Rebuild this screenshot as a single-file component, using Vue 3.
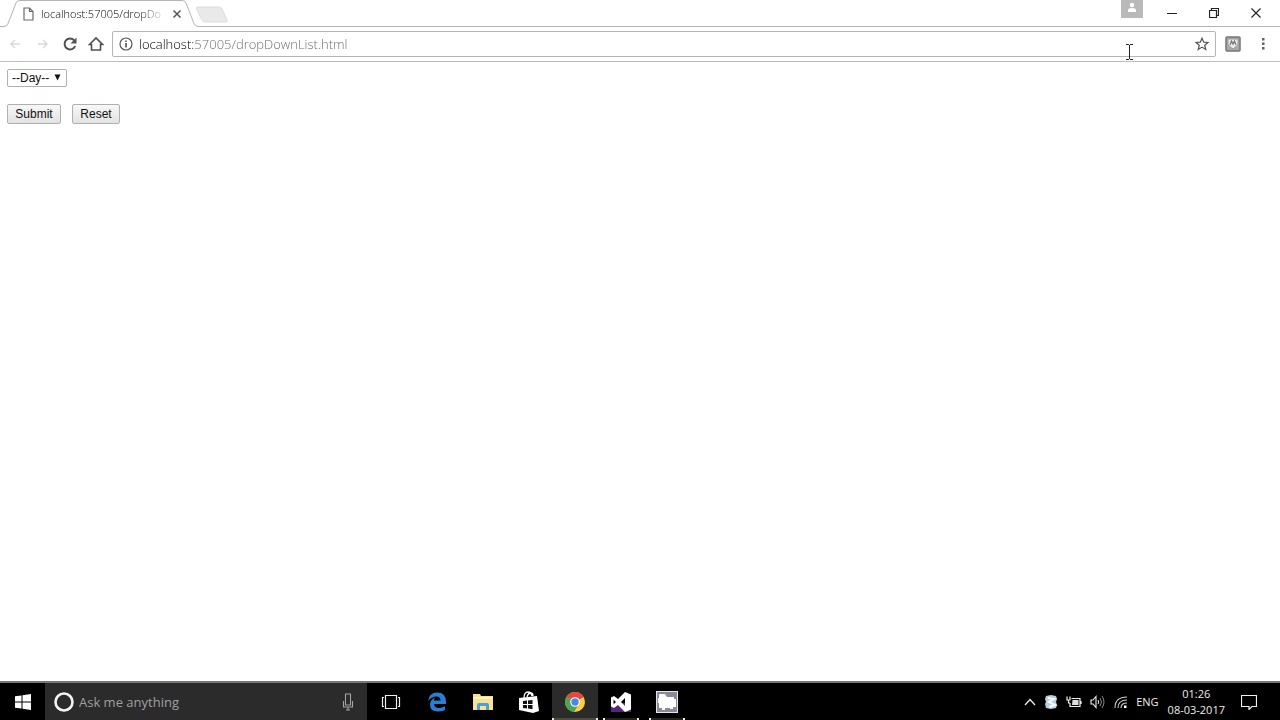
<script setup>
import { ref } from 'vue'
const address = ref('localhost:57005/dropDownList.html')
const query = ref('')
const day = ref('')
</script>

<template>
  <div class="screen">
    <header class="tabstrip">
      <div class="tab">
        <svg class="tab-shape" viewBox="0 0 198 27" width="198" height="27">
          <path d="M0 26.5H4Q7 26.5 8 23.500L16 3Q17 .5 20 .5H182Q185 .5 186 3L194 23.500Q195 26.500 198 26.500V27H0Z" fill="#fff" />
          <path d="M0 26.500H4Q7 26.500 8 23.500L16 3Q17 .5 20 .5H182Q185 .5 186 3L194 23.500Q195 26.500 198 26.500" fill="none" stroke="#b4b4b4" />
        </svg>
        <svg class="doc" viewBox="0 0 11 14" width="11" height="14"><path d="M1 1H6.500L10 4.500V13H1ZM6.500 1V4.500H10" fill="none" stroke="#6a6a6a" stroke-width="1.200" /></svg>
        <span class="title">localhost:57005/dropDo</span>
        <button class="tab-close" aria-label="Close tab"><svg viewBox="0 0 8 8" width="8" height="8"><path d="M.5 .5L7.500 7.500M7.500 .5L.5 7.500" stroke="#555" stroke-width="1.500" /></svg></button>
      </div>
      <div class="strip-rest">
        <button class="new-tab" aria-label="New tab"><svg viewBox="0 0 34 17" width="34" height="17"><path d="M3 1H24Q26 1 27 3L32 14Q33 16 30 16H10Q8 16 7 14L1.500 3Q1 1 3 1Z" fill="#e9e9e9" stroke="#dcdcdc" /></svg></button>
        <div class="window-controls">
          <button class="profile" aria-label="Profile"><svg viewBox="0 0 22 18" width="22" height="18"><path d="M0 0H22V18H0Z" fill="#b9b9b9" /><circle cx="11" cy="5" r="2.200" fill="#fff" /><path d="M7 12V10Q7 8 11 8Q15 8 15 10V12Z" fill="#fff" /></svg></button>
          <button aria-label="Minimize"><svg viewBox="0 0 10 10" width="10" height="10"><path d="M0 5.500H10" stroke="#222" /></svg></button>
          <button aria-label="Restore"><svg viewBox="0 0 10 10" width="10" height="10"><path d="M.5 2.500H7.500V9.500H.5ZM2.500 2.500V.5H9.500V7.500H7.500" fill="none" stroke="#222" stroke-width="1.200" /></svg></button>
          <button aria-label="Close"><svg viewBox="0 0 10 10" width="10" height="10"><path d="M.5 .5L9.500 9.500M9.500 .5L.5 9.500" stroke="#222" stroke-width="1.100" /></svg></button>
        </div>
      </div>
    </header>

    <nav class="toolbar">
      <button class="tool back" aria-label="Back"><svg viewBox="0 0 12 12" width="12" height="12"><path d="M11 6H2M6 2L2 6L6 10" fill="none" stroke="#dadada" stroke-width="1.500" /></svg></button>
      <button class="tool forward" aria-label="Forward"><svg viewBox="0 0 12 12" width="12" height="12"><path d="M1 6H10M6 2L10 6L6 10" fill="none" stroke="#dadada" stroke-width="1.500" /></svg></button>
      <button class="tool reload" aria-label="Reload"><svg viewBox="0 0 16 16" width="16" height="16"><path d="M13.200 10A5.500 5.500 0 1 1 12.200 4.300" fill="none" stroke="#505050" stroke-width="2" /><path d="M14.500 1.500V7.500H8.500Z" fill="#505050" /></svg></button>
      <button class="tool home" aria-label="Home"><svg viewBox="0 0 16 16" width="16" height="16"><path d="M1.500 8.500L8 2L14.500 8.500H12.500V14H3.500V8.500Z" fill="none" stroke="#505050" stroke-width="1.600" /></svg></button>
      <div class="omnibox">
        <svg viewBox="0 0 14 14" width="14" height="14"><circle cx="7" cy="7" r="6" fill="none" stroke="#555" stroke-width="1.200" /><path d="M7 6V10.500M7 3.500V5" stroke="#444" stroke-width="1.500" /></svg>
        <input v-model="address" class="address" type="text" aria-label="Address" spellcheck="false" />
        <button class="star" aria-label="Bookmark"><svg viewBox="0 0 14 14" width="14" height="14"><path d="M7 1.200L8.700 5.200L13 5.500L9.700 8.200L10.800 12.500L7 10.100L3.200 12.500L4.300 8.200L1 5.500L5.300 5.200Z" fill="none" stroke="#555" stroke-width="1.200" /></svg></button>
      </div>
      <button class="tool extension" aria-label="Extension"><svg viewBox="0 0 16 16" width="16" height="16"><rect x="1" y="1" width="14" height="14" rx="1" fill="#aaa" stroke="#777" stroke-width="1.500" /><path d="M3 3H13V9L8 13L3 9Z" fill="#ededed" stroke="#999" /><path d="M5 9L6.500 5L8 8L9.500 5L11 9" fill="none" stroke="#777" stroke-width="1.300" /></svg></button>
      <button class="tool menu" aria-label="Menu"><svg viewBox="0 0 4 14" width="4" height="14"><path d="M1 1H3.500V3.500H1ZM1 5.500H3.500V8H1ZM1 10H3.500V12.500H1Z" fill="#626262" /></svg></button>
      <svg class="cursor" viewBox="0 0 7 16" width="7" height="16"><path d="M0 .5H3M4 .5H7M3.500 1V15M0 15.500H3M4 15.500H7" stroke="#222" fill="none" /></svg>
    </nav>

    <main class="page">
      <form @submit.prevent>
        <div class="select-wrap">
          <select v-model="day" aria-label="Day"><option value="">--Day--</option></select>
          <svg viewBox="0 0 7 7" width="7" height="7"><path d="M.5 .5H6.500L3.500 6.500Z" fill="#111" /></svg>
        </div>
        <div class="actions">
          <button class="push submit" type="submit">Submit</button>
          <button class="push reset" type="reset">Reset</button>
        </div>
      </form>
    </main>

    <footer class="taskbar">
      <button class="start" aria-label="Start"><svg viewBox="0 0 16 16" width="16" height="16"><path d="M0 2.300L6.500 1.400V7.500H0ZM7.500 1.200L16 0V7.500H7.500ZM0 8.500H6.500V14.600L0 13.700ZM7.500 8.500H16V16L7.500 14.800Z" fill="#fff" /></svg></button>
      <div class="search">
        <svg viewBox="0 0 20 20" width="20" height="20"><circle cx="10" cy="10" r="8.500" fill="none" stroke="#f4f4f4" stroke-width="2.600" /></svg>
        <input v-model="query" type="text" placeholder="Ask me anything" aria-label="Ask me anything" />
        <button aria-label="Speak"><svg viewBox="0 0 12 18" width="12" height="18"><path d="M3.500 1H8.500V12H3.500ZM1.500 8V14H10.500V8M6 14V17M4 17H8" fill="none" stroke="#a3a3a3" stroke-width="1.100" /></svg></button>
      </div>
      <div class="apps">
        <button class="task-view" aria-label="Task view"><svg viewBox="0 0 20 14" width="20" height="14"><path d="M4.500 .5H15.500V13.500H4.500ZM3 2.500H1.500V11.500H3M17 2.500H18.500V11.500H17" fill="none" stroke="#eee" stroke-width="1.200" /></svg></button>
        <button aria-label="Edge"><svg viewBox="0 0 20 20" width="20" height="20"><path d="M1 9Q2 .5 10.500 .5Q19 .5 19 10V12H7Q7.500 16 12 16Q15 16 18 14.300V18Q15 19.500 11 19.500Q3 19.500 3 12.500Q3 8 8 5.500Q7 7 7 8.500H13.500Q13.500 4.500 9.500 4.500Q4.500 4.500 1 9Z" fill="#2b7cd3" /></svg></button>
        <button aria-label="File Explorer"><svg viewBox="0 0 20 18" width="20" height="18"><path d="M0 1H7L8 3H20V17H0Z" fill="#f8e296" /><path d="M1 4H19V6H1Z" fill="#fff3bd" /><path d="M4 17V12Q4 10 6 10H14Q16 10 16 12V17H13V13H7V17Z" fill="#4a9fdd" /></svg></button>
        <button aria-label="Store"><svg viewBox="0 0 20 22" width="20" height="22"><path d="M5 7Q5 1 9 1Q12 1 13 5M8 6Q9 2 12 2Q14 2 14 5" fill="none" stroke="#fff" stroke-width="1.300" /><path d="M0 7L18 5L20 20L14 22L0 19Z" fill="#fff" /><path d="M4 10L8 9.500V13H4ZM9 9.400L13.500 9V13H9ZM4 14H8V17.500L4 17ZM9 14H13.500V18.200L9 17.600Z" fill="#111" /></svg></button>
        <button class="active running" aria-label="Chrome"><svg viewBox="0 0 20 20" width="20" height="20"><circle cx="10" cy="10" r="10" fill="#f8cf45" /><path d="M10 10L1.340 5A10 10 0 0 1 18.660 5Z" fill="#df4b3d" /><path d="M10 5H18.660A10 10 0 0 0 10 0Z" fill="#df4b3d" /><path d="M1.340 5A10 10 0 0 0 9 19.950L14 12L10 10Z" fill="#4ba35c" /><circle cx="10" cy="10" r="4.800" fill="#fff" /><circle cx="10" cy="10" r="3.700" fill="#4a87ea" /></svg></button>
        <button class="running" aria-label="Visual Studio"><svg viewBox="0 0 20 20" width="20" height="20"><path d="M0 11H20V20H0Z" fill="#5c2478" /><path d="M14 0L20 2.500V17.500L14 20L7 13L3 16L0 14.500V5.500L3 4L7 7ZM14 6L10 10L14 14ZM2.500 7.500V12.500L5 10Z" fill="#fff" fill-rule="evenodd" /></svg></button>
        <button class="running" aria-label="Recorder"><svg viewBox="0 0 22 22" width="22" height="22"><path d="M0 0H22V22H0Z" fill="#e6e5ed" /><path d="M1 1H21V21H1Z" fill="#8b8998" /><path d="M3 4Q3 3 4 3H9L11 6H18V8H20V16H17V18H14V17H9V19H6V17H3V12H2V7H3Z" fill="#fff" /></svg></button>
      </div>
      <div class="tray">
        <svg viewBox="0 0 12 8" width="12" height="8"><path d="M1 7L6 1.500L11 7" fill="none" stroke="#eee" stroke-width="1.300" /></svg>
        <svg viewBox="0 0 14 14" width="14" height="14"><path d="M2 1L7 0L12 1L13 4L12 7L13 10L12 13L7 14L2 13L1 9L2 7L1 4Z" fill="#b9cddd" /><path d="M4 3L10 4L5 7L11 10L5 12" fill="none" stroke="#f5faff" stroke-width="2" /></svg>
        <svg viewBox="0 0 16 12" width="16" height="12"><path d="M5.500 2.500H14V10.500H4V7M15 5V8M1 .5V4H4V.5M2.500 4V7H4" fill="none" stroke="#eee" stroke-width="1.200" /><path d="M6.500 4H12.500V9H6Z" fill="#ddd" /></svg>
        <svg viewBox="0 0 16 14" width="16" height="14"><path d="M1 5H3L6 1.500V12.500L3 9H1Z" fill="none" stroke="#eee" stroke-width="1.100" /><path d="M8 5Q9.500 7 8 9" fill="none" stroke="#eee" /><path d="M10 3Q13 7 10 11M12 1Q16 7 12 13" fill="none" stroke="#888" /></svg>
        <svg viewBox="0 0 14 14" width="14" height="14"><path d="M1 13Q1 2 13 2M4 13Q4 5 13 5M7 13Q7 8 13 8" fill="none" stroke="#ccc" stroke-width="1.100" /><path d="M10 10.500H12.500V13H10Z" fill="#fff" /></svg>
        <span class="language">ENG</span>
        <time class="clock"><span>01:26</span><span>08-03-2017</span></time>
        <button class="notifications" aria-label="Notifications"><svg viewBox="0 0 16 16" width="16" height="16"><path d="M.5 1.500H15.500V12.500H11L8 15.500V12.500H.5Z" fill="none" stroke="#eee" stroke-width="1.200" /></svg></button>
      </div>
    </footer>
  </div>
</template>

<style>
body { background: #fff; }
</style>

<style scoped>
.screen { min-height: 100vh; display: flex; flex-direction: column; font-family: "Open Sans", "Noto Sans", sans-serif; }
* { box-sizing: border-box; }
button { border: 0; padding: 0; background: none; font: inherit; display: flex; align-items: center; justify-content: center; }
input { border: 0; padding: 0; outline: 0; background: none; font: inherit; min-width: 0; }
svg { flex: none; display: block; }
.tabstrip { height: 27px; display: flex; }
.tab { position: relative; width: 198px; display: flex; align-items: center; padding: 0 13px 0 23px; }
.tab-shape { position: absolute; inset: 0; }
.doc, .title, .tab-close { position: relative; }
.title { flex: 1; margin-left: 7px; white-space: nowrap; font-size: 11px; font-weight: 300; line-height: 16px; color: #000; mask-image: linear-gradient(90deg, #000 98px, transparent 126px); }
.tab-close { width: 16px; height: 16px; }
.strip-rest { flex: 1; display: flex; justify-content: space-between; align-items: flex-start; border-bottom: 1px solid #b4b4b4; }
.new-tab { margin-top: 6px; margin-left: -3px; }
.window-controls { display: flex; padding-right: 3px; }
.window-controls button { width: 42px; height: 25px; }
.window-controls .profile { width: 22px; height: 18px; margin-right: 8px; }
.toolbar { position: relative; height: 35px; display: flex; align-items: center; border-bottom: 1px solid #bdbdbd; padding: 0 4px 0 2px; }
.tool { flex: none; width: 26px; height: 26px; }
.forward { width: 30px; }
.reload { width: 24px; }
.home { width: 28px; }
.omnibox { flex: 1; min-width: 0; height: 26px; margin-left: 2px; border: 1px solid #b5b5b5; border-radius: 2px; display: flex; align-items: center; padding: 0 6px; gap: 6px; }
.address { flex: 1; height: 20px; font-size: 13px; font-weight: 300; color: transparent; background: linear-gradient(90deg, #000 54px, #666 54px); background-clip: text; -webkit-background-clip: text; }
.extension { width: 34px; }
.cursor { position: absolute; right: 147px; top: 17px; }
.page { flex: 1; padding: 7px; font-family: "Liberation Sans", Arial, sans-serif; font-size: 12px; }
.select-wrap { position: relative; width: 60px; height: 18px; }
select { appearance: none; width: 60px; height: 18px; border: 1px solid #b0b0b0; border-radius: 2px; padding: 0 4px; background: #fff; font: inherit; color: #111; }
.select-wrap svg { position: absolute; right: 6px; top: 5px; pointer-events: none; }
.actions { display: flex; gap: 11px; margin-top: 17px; }
.push { height: 20px; border: 1px solid #b0b0b0; border-radius: 2px; background: linear-gradient(#f8f8f8, #e2e2e2); color: #111; }
.submit { width: 54px; }
.reset { width: 48px; }
.taskbar { height: 39px; display: flex; background: #000; border-top: 2px solid #777; color: #eee; }
.start { width: 45px; }
.search { width: 322px; background: #2b2b2b; display: flex; align-items: center; padding: 0 13px 0 9px; }
.search input { flex: 1; margin-left: 5px; font-size: 13px; height: 24px; color: #ddd; }
.search input::placeholder { color: #a0a0a0; opacity: 1; }
.apps { display: flex; }
.apps button { position: relative; width: 46px; }
.apps .task-view { width: 47px; }
.apps .active { background: #2b2b2b; }
.running::after { content: ""; position: absolute; left: 5px; right: 5px; bottom: 0; height: 2px; background: #25241c; border: solid #eee; border-width: 0 2px; }
.active.running::after { left: 0; right: 0; background: #4c4d36; }
.tray { margin-left: auto; display: flex; align-items: center; gap: 8px; padding-right: 22px; font-size: 11px; }
.clock { display: flex; flex-direction: column; align-items: center; line-height: 16px; margin: 0 7px 0 1px; }
.notifications { width: 18px; height: 34px; }
</style>
